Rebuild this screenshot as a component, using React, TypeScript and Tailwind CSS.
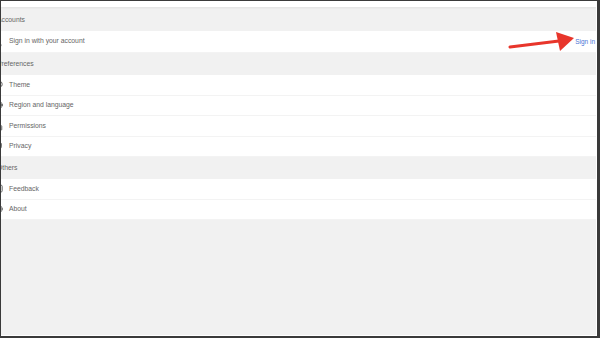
import React from 'react';
import { User, Palette, Globe, Lock, Shield, MessageSquare, Info } from 'lucide-react';

type Row = { label: string; icon: React.ReactNode; action?: string; tall?: boolean };
type Section = { title: string; rows: Row[] };

const iconCls = 'w-[10px] h-[10px] shrink-0 ml-[-8px] text-[#444]';

const sections: Section[] = [
  {
    title: 'Accounts',
    rows: [{ label: 'Sign in with your account', icon: <User className={iconCls} />, action: 'Sign in', tall: true }],
  },
  {
    title: 'Preferences',
    rows: [
      { label: 'Theme', icon: <Palette className={iconCls} /> },
      { label: 'Region and language', icon: <Globe className={iconCls} /> },
      { label: 'Permissions', icon: <Lock className={iconCls} /> },
      { label: 'Privacy', icon: <Shield className={iconCls} /> },
    ],
  },
  {
    title: 'Others',
    rows: [
      { label: 'Feedback', icon: <MessageSquare className={iconCls} /> },
      { label: 'About', icon: <Info className={iconCls} /> },
    ],
  },
];

export default function App() {
  return (
    <div className="w-[600px] h-[338px] bg-[#3a3a3a] pt-[1px] pl-[1px] pr-[3px] pb-[2px] font-['Liberation_Sans',sans-serif]">
      <div className="relative w-full h-full bg-[#f1f1f1] border-r border-b border-white overflow-hidden flex flex-col">
        <div className="h-[6px] bg-white shadow-[0_1px_3px_rgba(0,0,0,0.08)] shrink-0" />
        {sections.map((section, i) => (
          <div key={section.title} className={i === 0 ? 'mt-[2px]' : ''}>
            <div className="h-[22px] flex items-center ml-[-4px] text-[6.8px] text-[#666]">{section.title}</div>
            {section.rows.map((row) => (
              <div
                key={row.label}
                className={`${row.tall ? 'h-[22px]' : 'h-[20.5px]'} bg-white border-b border-[#f3f3f3] flex items-center`}
              >
                {row.icon}
                <span className="ml-[6px] text-[6.8px] text-[#666]">{row.label}</span>
                {row.action && (
                  <span className="ml-auto mr-[1px] text-[6.5px] text-[#4a74d6]">{row.action}</span>
                )}
              </div>
            ))}
          </div>
        ))}

        <svg className="absolute left-0 top-0" width="597" height="336" viewBox="0 0 597 336">
          <line x1="509" y1="46" x2="558" y2="40" stroke="#e8352b" strokeWidth="3" strokeLinecap="round" />
          <polygon points="573,37 555,31 559,50" fill="#e8352b" />
        </svg>
      </div>
    </div>
  );
}
